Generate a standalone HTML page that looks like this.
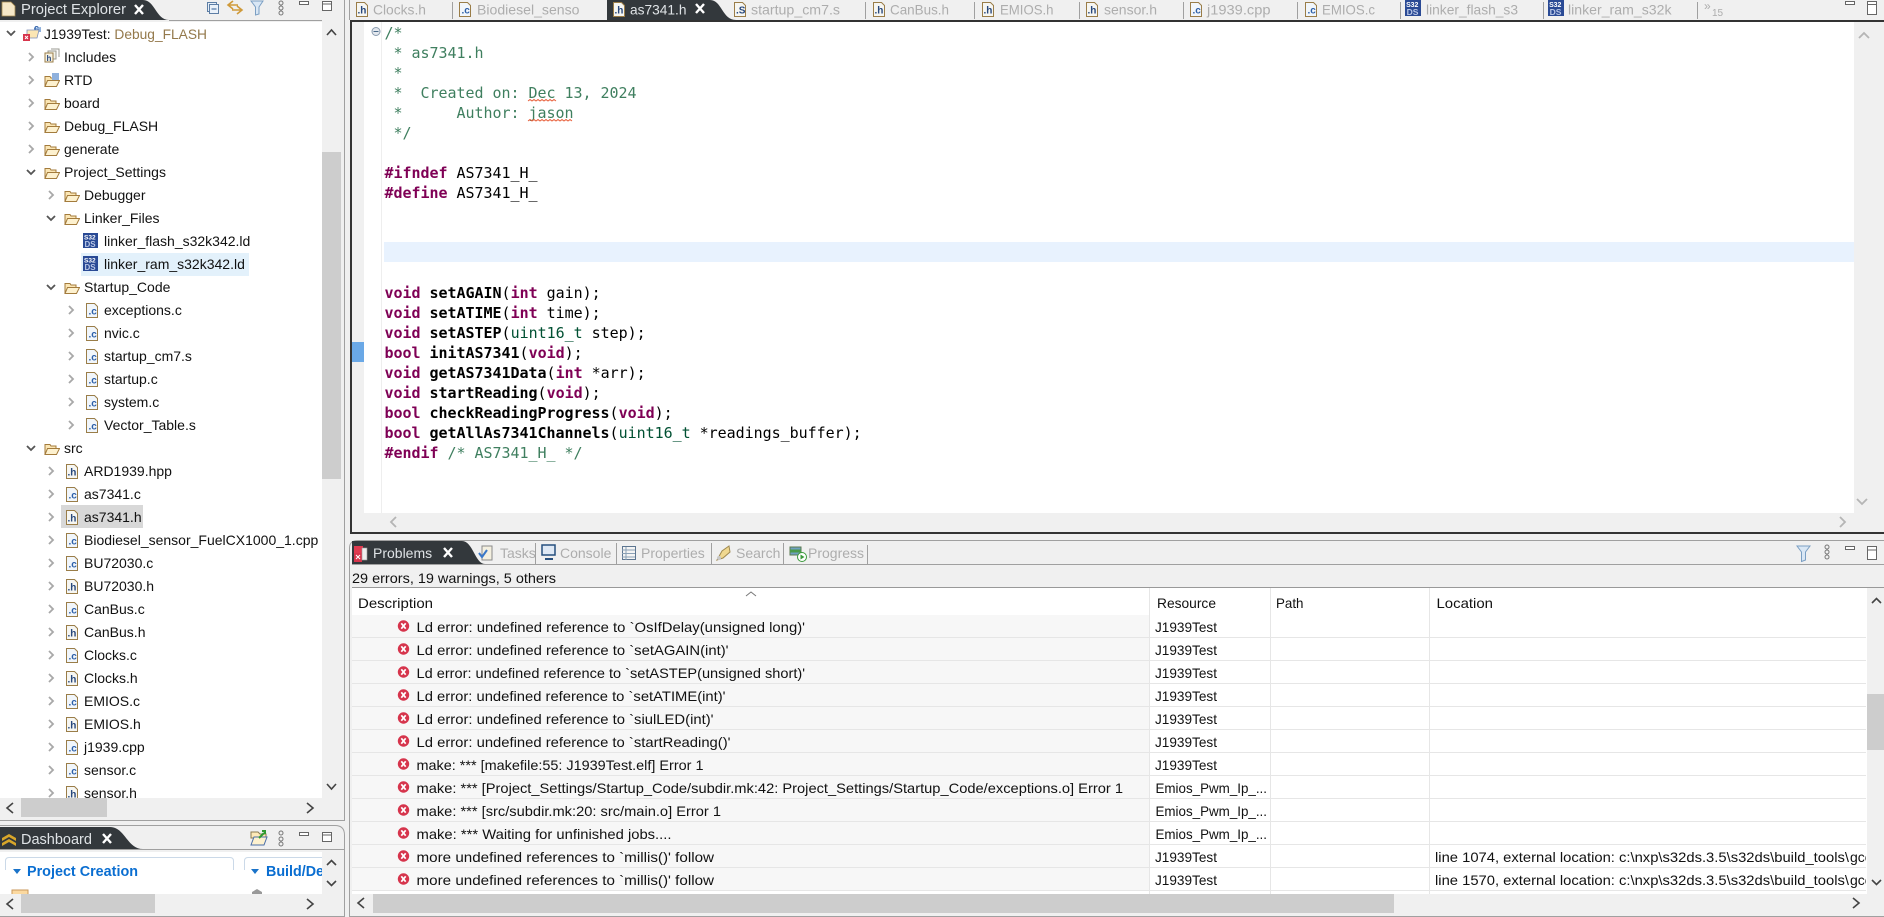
<!DOCTYPE html>
<html><head><meta charset="utf-8"><title>J1939Test</title>
<style>
html,body{margin:0;padding:0;background:#f0f0f0;width:1884px;height:917px;overflow:hidden}
svg{display:block;position:absolute;left:0;top:0}
text{font-family:"Liberation Sans",sans-serif;font-size:14px;fill:#111;white-space:pre}
.g{fill:#adadad}.w{fill:#dfe3e6}
.m{font-family:"DejaVu Sans Mono",monospace;font-size:15px;letter-spacing:-.03px;fill:#000}
.c{fill:#3f7f5f}.k{fill:#7f0055;font-weight:bold}.f{font-weight:bold}.t{fill:#005032}
.a{fill:none;stroke:#555;stroke-width:1.8}.n{fill:none;stroke:#a8a8a8;stroke-width:1.8}
.v{fill:none;stroke:#444;stroke-width:1.6}
.l{stroke:#e6e6e6;stroke-width:1;fill:none}
.b{stroke:#a0a0a0;stroke-width:1;fill:none}
.th{fill:#cdcdcd}
</style></head><body>
<svg width="1884" height="917" viewBox="0 0 1884 917" xmlns="http://www.w3.org/2000/svg">
<defs>
<symbol id="fo" viewBox="0 0 16 14"><path d="M1 12.5V2.500h5l1 1.500h5v2.500" fill="#fbe6b4" stroke="#a37b3c"/><path d="M1 12.500 3.500 6.500H15.500l-3 6z" fill="#fdf1cf" stroke="#a37b3c"/></symbol>
<symbol id="fc" viewBox="0 0 12 15"><path d="M.5 .5H8.500L11.500 3.500V14.500H.5z" fill="#f1f6fb" stroke="#9a7d48"/><text x="2.500" y="11.500" style="font-size:10px;font-weight:bold;fill:#2c5fa8">.c</text></symbol>
<symbol id="fh" viewBox="0 0 12 15"><path d="M.5 .5H8.500L11.500 3.500V14.500H.5z" fill="#f6f6f2" stroke="#9a7d48"/><text x="1.500" y="11.500" style="font-size:10px;font-weight:bold;fill:#27477c">.h</text></symbol>
<symbol id="fs" viewBox="0 0 12 15"><path d="M.5 .5H8.500L11.500 3.500V14.500H.5z" fill="#f6f6f2" stroke="#9a7d48"/><text x="2" y="11.500" style="font-size:10px;font-weight:bold;fill:#27477c">.S</text></symbol>
<symbol id="s3" viewBox="0 0 15 15"><rect width="15" height="15" fill="#2a4a95"/><text x="1" y="6.500" style="font-size:6.500px;font-weight:bold;fill:#fff">S32</text><text x="1.500" y="14" style="font-size:8px;font-weight:bold;fill:#b8c6e6">DS</text></symbol>
<symbol id="er" viewBox="0 0 12 12"><circle cx="6" cy="6" r="5.700" fill="#d6344c"/><path d="M3.800 3.300 8.200 8.700M8.200 3.300 3.800 8.700" stroke="#fff" stroke-width="1.700"/></symbol>
</defs>

<!-- ===== left panel ===== -->
<rect x="0" y="22" width="322" height="776" fill="#fff"/>
<rect x="81" y="253" width="168" height="23" fill="#e3f1fb"/>
<rect x="61" y="505" width="82" height="23" fill="#d8d8d8"/>
<!-- project explorer tab -->
<path d="M0 0H143C155 0 156 20 169 20H0z" fill="#33383c"/>
<path d="M169 20.500H322" class="b"/>
<path d="M2 2h9l4 4v10H2z" fill="#f4e7c8" stroke="#a68a50" stroke-width=".8"/>
<text x="21" y="14" class="w" style="font-size:14.500px" textLength="105" lengthAdjust="spacingAndGlyphs">Project Explorer</text>
<path d="M135 5l8 9M143 5l-8 9" stroke="#fff" stroke-width="2.400"/>
<rect x="207.500" y="2.500" width="9" height="9" fill="#e6eef7" stroke="#5d7ea5"/><rect x="209.500" y="4.500" width="9" height="9" fill="#eaf1f9" stroke="#5d7ea5"/><path d="M211.500 9h5" stroke="#2e5c92"/>
<path d="M228 5h10M233 1l-5 4 5 4M242 10h-10M237 6l5 4-5 4" fill="none" stroke="#cf9a3a" stroke-width="1.600"/>
<path d="M251 1H263L259 7V14L255.500 15V7z" fill="#d9e7f5" stroke="#7b9fc3"/>
<circle cx="281" cy="3" r="2" fill="none" stroke="#777"/><circle cx="281" cy="8" r="2" fill="none" stroke="#777"/><circle cx="281" cy="13" r="2" fill="none" stroke="#777"/>
<rect x="299.500" y="1.500" width="9" height="3" fill="#fff" stroke="#666"/>
<rect x="322.500" y="1.500" width="9" height="9" fill="#fff" stroke="#666"/><path d="M322 4h10" stroke="#666"/>

<!-- tree -->
<path class="a" d="M7 31l4 4 4-4"/>
<path d="M34 28l7-1v5h-7z" fill="#8fb1dd"/><text x="34" y="31" style="font-size:9px;font-weight:bold;fill:#2c5fa8">c</text>
<path d="M27 30h12l-2 8H27z" fill="#fbe6b4" stroke="#7c8fb8" stroke-width=".8"/><rect x="23" y="34" width="7" height="7" fill="#d7354c"/><path d="M25 36l3 3M28 36l-3 3" stroke="#fff"/>
<text x="44" y="39" textLength="163" lengthAdjust="spacingAndGlyphs">J1939Test:<tspan fill="#94794b"> Debug_FLASH</tspan></text>

<path class="n" d="M29 53l4 4-4 4"/><path d="M48 51h8v8h-8z" fill="#f2f2ea" stroke="#9a9a90"/><path d="M51 49h8v8" fill="none" stroke="#9a9a90"/><rect x="45" y="53" width="8" height="9" fill="#f8f4e4" stroke="#9a7d48"/><text x="46.500" y="61" style="font-size:8px;font-weight:bold;fill:#27477c">h</text>
<text x="64" y="62">Includes</text>
<path class="n" d="M29 76l4 4-4 4"/><use href="#fo" x="44" y="74" width="16" height="14"/><rect x="52" y="73" width="7" height="7" fill="#8fb1dd"/><text x="64" y="85">RTD</text>
<path class="n" d="M29 99l4 4-4 4"/><use href="#fo" x="44" y="97" width="16" height="14"/><text x="64" y="108">board</text>
<path class="n" d="M29 122l4 4-4 4"/><use href="#fo" x="44" y="120" width="16" height="14"/><text x="64" y="131">Debug_FLASH</text>
<path class="n" d="M29 145l4 4-4 4"/><use href="#fo" x="44" y="143" width="16" height="14"/><text x="64" y="154">generate</text>
<path class="a" d="M27 170l4 4 4-4"/><use href="#fo" x="44" y="166" width="16" height="14"/><text x="64" y="177">Project_Settings</text>
<path class="n" d="M49 191l4 4-4 4"/><use href="#fo" x="64" y="189" width="16" height="14"/><text x="84" y="200">Debugger</text>
<path class="a" d="M47 216l4 4 4-4"/><use href="#fo" x="64" y="212" width="16" height="14"/><text x="84" y="223">Linker_Files</text>
<use href="#s3" x="83" y="233" width="15" height="15"/><text x="104" y="246">linker_flash_s32k342.ld</text>
<use href="#s3" x="83" y="256" width="15" height="15"/><text x="104" y="269">linker_ram_s32k342.ld</text>
<path class="a" d="M47 285l4 4 4-4"/><use href="#fo" x="64" y="281" width="16" height="14"/><text x="84" y="292">Startup_Code</text>
<path class="n" d="M69 306l4 4-4 4"/><use href="#fc" x="86" y="303" width="12" height="15"/><text x="104" y="315">exceptions.c</text>
<path class="n" d="M69 329l4 4-4 4"/><use href="#fc" x="86" y="326" width="12" height="15"/><text x="104" y="338">nvic.c</text>
<path class="n" d="M69 352l4 4-4 4"/><use href="#fc" x="86" y="349" width="12" height="15"/><text x="104" y="361">startup_cm7.s</text>
<path class="n" d="M69 375l4 4-4 4"/><use href="#fc" x="86" y="372" width="12" height="15"/><text x="104" y="384">startup.c</text>
<path class="n" d="M69 398l4 4-4 4"/><use href="#fc" x="86" y="395" width="12" height="15"/><text x="104" y="407">system.c</text>
<path class="n" d="M69 421l4 4-4 4"/><use href="#fc" x="86" y="418" width="12" height="15"/><text x="104" y="430">Vector_Table.s</text>
<path class="a" d="M27 446l4 4 4-4"/><use href="#fo" x="44" y="442" width="16" height="14"/><text x="64" y="453">src</text>
<path class="n" d="M49 467l4 4-4 4"/><use href="#fh" x="66" y="464" width="12" height="15"/><text x="84" y="476">ARD1939.hpp</text>
<path class="n" d="M49 490l4 4-4 4"/><use href="#fc" x="66" y="487" width="12" height="15"/><text x="84" y="499">as7341.c</text>
<path class="n" d="M49 513l4 4-4 4"/><use href="#fh" x="66" y="510" width="12" height="15"/><text x="84" y="522">as7341.h</text>
<path class="n" d="M49 536l4 4-4 4"/><use href="#fc" x="66" y="533" width="12" height="15"/><text x="84" y="545">Biodiesel_sensor_FuelCX1000_1.cpp</text>
<path class="n" d="M49 559l4 4-4 4"/><use href="#fc" x="66" y="556" width="12" height="15"/><text x="84" y="568">BU72030.c</text>
<path class="n" d="M49 582l4 4-4 4"/><use href="#fh" x="66" y="579" width="12" height="15"/><text x="84" y="591">BU72030.h</text>
<path class="n" d="M49 605l4 4-4 4"/><use href="#fc" x="66" y="602" width="12" height="15"/><text x="84" y="614">CanBus.c</text>
<path class="n" d="M49 628l4 4-4 4"/><use href="#fh" x="66" y="625" width="12" height="15"/><text x="84" y="637">CanBus.h</text>
<path class="n" d="M49 651l4 4-4 4"/><use href="#fc" x="66" y="648" width="12" height="15"/><text x="84" y="660">Clocks.c</text>
<path class="n" d="M49 674l4 4-4 4"/><use href="#fh" x="66" y="671" width="12" height="15"/><text x="84" y="683">Clocks.h</text>
<path class="n" d="M49 697l4 4-4 4"/><use href="#fc" x="66" y="694" width="12" height="15"/><text x="84" y="706">EMIOS.c</text>
<path class="n" d="M49 720l4 4-4 4"/><use href="#fh" x="66" y="717" width="12" height="15"/><text x="84" y="729">EMIOS.h</text>
<path class="n" d="M49 743l4 4-4 4"/><use href="#fc" x="66" y="740" width="12" height="15"/><text x="84" y="752">j1939.cpp</text>
<path class="n" d="M49 766l4 4-4 4"/><use href="#fc" x="66" y="763" width="12" height="15"/><text x="84" y="775">sensor.c</text>
<path class="n" d="M49 789l4 4-4 4"/><use href="#fh" x="66" y="786" width="12" height="15"/><text x="84" y="798">sensor.h</text>

<!-- left scrollbars -->
<rect x="322" y="22" width="21" height="776" fill="#f0f0f0"/>
<rect x="322" y="152" width="19" height="327" class="th"/>
<path class="v" d="M327 35l4.500-5 4.500 5"/><path class="v" d="M327 784l4.500 5 4.500-5"/>
<rect x="0" y="798" width="343" height="22" fill="#f0f0f0"/>
<rect x="21" y="798" width="86" height="19" class="th"/>
<path class="v" d="M13 803l-6 5 6 5"/><path class="v" d="M307 803l6 5-6 5"/>
<path class="b" d="M0 820.500H344.500M344.500 0V821"/>

<!-- dashboard -->
<rect x="0" y="852" width="322" height="42" fill="#fff"/>
<path class="b" d="M0 825.500H335Q344.500 825.500 344.500 835V917M0 849.500H344M0 916.500H344"/>
<path d="M0 827H110C125 827 127 849 143 849H0z" fill="#33383c"/>
<path d="M2 838l7-4 7 4v3l-7-4-7 4zM2 843l7-4 7 4v3l-7-4-7 4z" fill="#d8a62a"/>
<text x="21" y="844" class="w" style="font-size:14.500px">Dashboard</text>
<path d="M103 834l8 9M111 834l-8 9" stroke="#fff" stroke-width="2.400"/>
<path d="M251 832h7l2 2h6v4H251z" fill="#fde9b8" stroke="#8a7a50"/><path d="M251 845l3-8h13l-3 8z" fill="#fdf1cf" stroke="#4a6ea8"/><path d="M259 838l5-5M262 831h3v3" stroke="#2f9a2f" stroke-width="2" fill="none"/>
<circle cx="281" cy="833" r="2" fill="none" stroke="#777"/><circle cx="281" cy="839" r="2" fill="none" stroke="#777"/><circle cx="281" cy="844" r="2" fill="none" stroke="#777"/>
<rect x="299.500" y="832.500" width="9" height="3" fill="#fff" stroke="#666"/>
<rect x="322.500" y="832.500" width="9" height="9" fill="#fff" stroke="#666"/><path d="M322 835h10" stroke="#666"/>
<path d="M5.500 870V861Q5.500 857.500 9 857.500H230Q233.500 857.500 233.500 861V870" fill="none" stroke="#cbd9e8"/>
<path d="M244.500 870V861Q244.500 857.500 248 857.500H322" fill="none" stroke="#cbd9e8"/>
<path d="M13 869h8l-4 5z" fill="#1a73c9"/>
<text x="27" y="876" style="font-size:14.300px;font-weight:bold;fill:#0a6ed1" textLength="111" lengthAdjust="spacingAndGlyphs">Project Creation</text>
<path d="M251 869h8l-4 5z" fill="#1a73c9"/>
<svg x="0" y="849" width="322" height="45" viewBox="0 849 322 45">
<text x="266" y="876" style="font-size:14.300px;font-weight:bold;fill:#0a6ed1">Build/Debug</text>
<rect x="12" y="890" width="16" height="8" fill="#fbd9a0" stroke="#c9975a"/>
<text x="36" y="904" style="font-size:14px;font-weight:bold;fill:#0a6ed1">S32DS Project from Example</text>
<path d="M252 892l5-3 5 3v4h-10z" fill="#999"/>
<text x="275" y="904" style="font-size:14px;font-weight:bold;fill:#0a6ed1">Build</text>
</svg>
<path class="v" d="M327 865l4.500-4.500 4.500 4.500"/><path class="v" d="M327 881l4.500 4.500 4.500-4.500"/>
<rect x="21" y="894" width="134" height="19" class="th"/>
<path class="v" d="M13 899l-6 5 6 5"/><path class="v" d="M307 899l6 5-6 5"/>

<!-- ===== editor ===== -->
<path class="b" d="M349.500 0V20"/>
<rect x="352" y="22" width="1502" height="491" fill="#fff"/>
<rect x="352" y="22" width="12" height="491" fill="#f0f0f0"/>
<path d="M381.500 22V513" stroke="#eeeeee"/>
<rect x="384" y="242" width="1470" height="20" fill="#e8f2fe"/>
<rect x="352" y="342" width="12" height="20" fill="#6aa8e6"/>
<circle cx="376" cy="31.500" r="4" fill="#e4e8ee" stroke="#8a9cb0"/><path d="M373.500 31.500h5" stroke="#4a6a8a"/>

<text class="m c" x="384.500" y="38">/*</text>
<text class="m c" x="384.500" y="58"> * as7341.h</text>
<text class="m c" x="384.500" y="78"> *</text>
<text class="m c" x="384.500" y="98"> *  Created on: Dec 13, 2024</text>
<text class="m c" x="384.500" y="118"> *      Author: jason</text>
<text class="m c" x="384.500" y="138"> */</text>
<path d="M528 101l2-1.500 2 1.500 2-1.500 2 1.500 2-1.500 2 1.500 2-1.500 2 1.500 2-1.500 2 1.500 2-1.500 2 1.500 2-1.500 2 1.500" fill="none" stroke="#e8603c"/>
<path d="M528 121l2-1.500 2 1.500 2-1.500 2 1.500 2-1.500 2 1.500 2-1.500 2 1.500 2-1.500 2 1.500 2-1.500 2 1.500 2-1.500 2 1.500 2-1.500 2 1.500 2-1.500 2 1.500 2-1.500 2 1.500 2-1.500 2 1.500" fill="none" stroke="#e8603c"/>
<text class="m" x="384.500" y="178"><tspan class="k">#ifndef</tspan> AS7341_H_</text>
<text class="m" x="384.500" y="198"><tspan class="k">#define</tspan> AS7341_H_</text>
<text class="m" x="384.500" y="298"><tspan class="k">void</tspan> <tspan class="f">setAGAIN</tspan>(<tspan class="k">int</tspan> gain);</text>
<text class="m" x="384.500" y="318"><tspan class="k">void</tspan> <tspan class="f">setATIME</tspan>(<tspan class="k">int</tspan> time);</text>
<text class="m" x="384.500" y="338"><tspan class="k">void</tspan> <tspan class="f">setASTEP</tspan>(<tspan class="t">uint16_t</tspan> step);</text>
<text class="m" x="384.500" y="358"><tspan class="k">bool</tspan> <tspan class="f">initAS7341</tspan>(<tspan class="k">void</tspan>);</text>
<text class="m" x="384.500" y="378"><tspan class="k">void</tspan> <tspan class="f">getAS7341Data</tspan>(<tspan class="k">int</tspan> *arr);</text>
<text class="m" x="384.500" y="398"><tspan class="k">void</tspan> <tspan class="f">startReading</tspan>(<tspan class="k">void</tspan>);</text>
<text class="m" x="384.500" y="418"><tspan class="k">bool</tspan> <tspan class="f">checkReadingProgress</tspan>(<tspan class="k">void</tspan>);</text>
<text class="m" x="384.500" y="438"><tspan class="k">bool</tspan> <tspan class="f">getAllAs7341Channels</tspan>(<tspan class="t">uint16_t</tspan> *readings_buffer);</text>
<text class="m" x="384.500" y="458"><tspan class="k">#endif</tspan> <tspan class="c">/* AS7341_H_ */</tspan></text>

<!-- editor frame + scrollbars -->
<path d="M1859 38l5-5 5 5" fill="none" stroke="#b5b5b5" stroke-width="1.800"/>
<path d="M1857 499l5 5 5-5" fill="none" stroke="#b5b5b5" stroke-width="1.800"/>
<path d="M396 517l-5 5 5 5" fill="none" stroke="#b5b5b5" stroke-width="1.800"/>
<path d="M1840 517l5 5-5 5" fill="none" stroke="#b5b5b5" stroke-width="1.800"/>
<rect x="350" y="20" width="1534" height="2" fill="#333"/>
<rect x="350" y="20" width="2" height="514" fill="#333"/>
<rect x="350" y="532" width="1534" height="2" fill="#333"/>

<!-- editor tabs -->
<path class="b" d="M452.500 2V19M865.500 2V19M974.500 2V19M1079.500 2V19M1183.500 2V19M1297.500 2V19M1400.500 2V19M1543.500 2V19M1697.500 2V19"/>
<use href="#fh" x="356" y="2" width="12" height="15"/><text x="373" y="14.500" class="g" textLength="53" lengthAdjust="spacingAndGlyphs">Clocks.h</text>
<use href="#fc" x="459" y="2" width="12" height="15"/><text x="477" y="14.500" class="g" textLength="102.500" lengthAdjust="spacingAndGlyphs">Biodiesel_senso</text>
<path d="M607 0H710C722 0 722 20 736 20H607z" fill="#33383c"/>
<use href="#fh" x="613" y="2" width="12" height="15"/><text x="630" y="14.500" class="w" textLength="56.500" lengthAdjust="spacingAndGlyphs">as7341.h</text>
<path d="M696 4l8 9M704 4l-8 9" stroke="#fff" stroke-width="2.400"/>
<use href="#fs" x="734" y="2" width="12" height="15"/><text x="751" y="14.500" class="g" textLength="89" lengthAdjust="spacingAndGlyphs">startup_cm7.s</text>
<use href="#fh" x="873" y="2" width="12" height="15"/><text x="890" y="14.500" class="g" textLength="59" lengthAdjust="spacingAndGlyphs">CanBus.h</text>
<use href="#fh" x="982" y="2" width="12" height="15"/><text x="1000" y="14.500" class="g" textLength="53.500" lengthAdjust="spacingAndGlyphs">EMIOS.h</text>
<use href="#fh" x="1086" y="2" width="12" height="15"/><text x="1104" y="14.500" class="g" textLength="53" lengthAdjust="spacingAndGlyphs">sensor.h</text>
<use href="#fc" x="1190" y="2" width="12" height="15"/><text x="1207" y="14.500" class="g" textLength="63.500" lengthAdjust="spacingAndGlyphs">j1939.cpp</text>
<use href="#fc" x="1305" y="2" width="12" height="15"/><text x="1322" y="14.500" class="g" textLength="53" lengthAdjust="spacingAndGlyphs">EMIOS.c</text>
<use href="#s3" x="1405" y="0" width="16" height="16"/><text x="1426" y="14.500" class="g" textLength="92" lengthAdjust="spacingAndGlyphs">linker_flash_s3</text>
<use href="#s3" x="1548" y="0" width="16" height="16"/><text x="1568" y="14.500" class="g" textLength="103.500" lengthAdjust="spacingAndGlyphs">linker_ram_s32k</text>
<text x="1704" y="10" class="g" style="font-size:12px">»</text><text x="1712" y="16" class="g" style="font-size:10px">15</text>
<rect x="1845.500" y="1.500" width="9" height="3" fill="#fff" stroke="#666"/>
<rect x="1867.500" y="1.500" width="9" height="13" fill="#fff" stroke="#666"/><path d="M1867 4.500h10" stroke="#666"/>

<!-- ===== problems ===== -->
<path class="b" d="M349.500 917V548Q349.500 540.500 358 540.500H1884M352 564.500H1884M349 916.500H1884"/>
<path d="M352 587.500H1884" stroke="#999"/>
<path d="M352 541H462C473 541 475 564 485 564H352z" fill="#33383c"/>
<rect x="354" y="546" width="9" height="9" fill="#e03a50"/><rect x="354" y="553" width="8" height="9" fill="#d7354c"/><path d="M356 555l4 4M360 555l-4 4" stroke="#fff"/><rect x="362" y="548" width="5" height="12" fill="#eee" stroke="#999" stroke-width=".6"/>
<text x="373" y="558" class="w">Problems</text>
<path d="M444 548l8 9M452 548l-8 9" stroke="#fff" stroke-width="2.400"/>
<path class="b" d="M535.500 543V564M616.500 543V564M711.500 543V564M783.500 543V564M867.500 545V564"/>
<path d="M482 546h10v14h-10z" fill="#f4f0e0" stroke="#8a8a8a"/><path d="M479 553l3 4 5-7" fill="none" stroke="#3a78c8" stroke-width="2"/>
<text x="500" y="558" class="g">Tasks</text>
<rect x="542" y="545" width="13" height="10" fill="#dfe9f5" stroke="#27507f" stroke-width="1.500"/><path d="M545 559h8" stroke="#27507f" stroke-width="2"/>
<text x="560" y="558" class="g">Console</text>
<rect x="622.500" y="546.500" width="13" height="13" fill="#f4f4f4" stroke="#5c7590"/><path d="M622 550h13M622 553.500h13M622 557h13M626 547v13" stroke="#8aa0b5"/>
<text x="641" y="558" class="g">Properties</text>
<path d="M717 560l5-9 7-5 1 6-7 6z" fill="#f0d890" stroke="#a08a50"/><circle cx="719" cy="558" r="2" fill="#c8c8c8"/>
<text x="736" y="558" class="g">Search</text>
<rect x="790" y="547" width="11" height="8" fill="#6fa0c0" stroke="#5a7a50"/><path d="M790 551h11" stroke="#4a9a4a" stroke-width="3"/><circle cx="802" cy="557" r="4.500" fill="#fff" stroke="#3a9a3a"/><path d="M800.500 554.500v5l4-2.500z" fill="#3a9a3a"/>
<text x="808" y="558" class="g">Progress</text>
<path d="M1797 546h13l-4.500 6v8l-4 1.500V552z" fill="#d9e7f5" stroke="#7b9fc3"/>
<circle cx="1827" cy="547" r="2" fill="none" stroke="#777"/><circle cx="1827" cy="552" r="2" fill="none" stroke="#777"/><circle cx="1827" cy="557" r="2" fill="none" stroke="#777"/>
<rect x="1845.500" y="546.500" width="9" height="3" fill="#fff" stroke="#666"/>
<rect x="1867.500" y="546.500" width="9" height="13" fill="#fff" stroke="#666"/><path d="M1867 550h10" stroke="#666"/>
<text x="352" y="583" textLength="204" lengthAdjust="spacingAndGlyphs">29 errors, 19 warnings, 5 others</text>

<rect x="352" y="588" width="1515" height="306" fill="#fff"/>
<rect x="352" y="615" width="797" height="276" fill="#f7f7f7"/>
<path d="M746 596l5-4 5 4" fill="none" stroke="#777"/>
<text x="358" y="608" textLength="75" lengthAdjust="spacingAndGlyphs">Description</text>
<text x="1157" y="608" textLength="59" lengthAdjust="spacingAndGlyphs">Resource</text>
<text x="1276" y="608" textLength="27.500" lengthAdjust="spacingAndGlyphs">Path</text>
<text x="1436.500" y="608" textLength="56.500" lengthAdjust="spacingAndGlyphs">Location</text>
<path class="l" d="M352 637.500H1866M352 660.500H1866M352 683.500H1866M352 706.500H1866M352 729.500H1866M352 752.500H1866M352 775.500H1866M352 798.500H1866M352 821.500H1866M352 844.500H1866M352 867.500H1866M352 890.500H1866M1149.500 588V894M1270.500 588V894M1429.500 588V894"/>

<use href="#er" x="397.500" y="620" width="12" height="12"/><text x="416.500" y="632" textLength="388.500" lengthAdjust="spacingAndGlyphs">Ld error: undefined reference to `OsIfDelay(unsigned long)'</text>
<use href="#er" x="397.500" y="643" width="12" height="12"/><text x="416.500" y="655" textLength="312" lengthAdjust="spacingAndGlyphs">Ld error: undefined reference to `setAGAIN(int)'</text>
<use href="#er" x="397.500" y="666" width="12" height="12"/><text x="416.500" y="678" textLength="388.500" lengthAdjust="spacingAndGlyphs">Ld error: undefined reference to `setASTEP(unsigned short)'</text>
<use href="#er" x="397.500" y="689" width="12" height="12"/><text x="416.500" y="701" textLength="309" lengthAdjust="spacingAndGlyphs">Ld error: undefined reference to `setATIME(int)'</text>
<use href="#er" x="397.500" y="712" width="12" height="12"/><text x="416.500" y="724" textLength="297" lengthAdjust="spacingAndGlyphs">Ld error: undefined reference to `siulLED(int)'</text>
<use href="#er" x="397.500" y="735" width="12" height="12"/><text x="416.500" y="747" textLength="314" lengthAdjust="spacingAndGlyphs">Ld error: undefined reference to `startReading()'</text>
<use href="#er" x="397.500" y="758" width="12" height="12"/><text x="416.500" y="770" textLength="287" lengthAdjust="spacingAndGlyphs">make: *** [makefile:55: J1939Test.elf] Error 1</text>
<use href="#er" x="397.500" y="781" width="12" height="12"/><text x="416.500" y="793" textLength="706.500" lengthAdjust="spacingAndGlyphs">make: *** [Project_Settings/Startup_Code/subdir.mk:42: Project_Settings/Startup_Code/exceptions.o] Error 1</text>
<use href="#er" x="397.500" y="804" width="12" height="12"/><text x="416.500" y="816" textLength="304.500" lengthAdjust="spacingAndGlyphs">make: *** [src/subdir.mk:20: src/main.o] Error 1</text>
<use href="#er" x="397.500" y="827" width="12" height="12"/><text x="416.500" y="839" textLength="255" lengthAdjust="spacingAndGlyphs">make: *** Waiting for unfinished jobs....</text>
<use href="#er" x="397.500" y="850" width="12" height="12"/><text x="416.500" y="862" textLength="297.500" lengthAdjust="spacingAndGlyphs">more undefined references to `millis()' follow</text>
<use href="#er" x="397.500" y="873" width="12" height="12"/><text x="416.500" y="885" textLength="297.500" lengthAdjust="spacingAndGlyphs">more undefined references to `millis()' follow</text>

<text x="1155" y="632" textLength="62" lengthAdjust="spacingAndGlyphs">J1939Test</text><text x="1155" y="655" textLength="62" lengthAdjust="spacingAndGlyphs">J1939Test</text><text x="1155" y="678" textLength="62" lengthAdjust="spacingAndGlyphs">J1939Test</text><text x="1155" y="701" textLength="62" lengthAdjust="spacingAndGlyphs">J1939Test</text><text x="1155" y="724" textLength="62" lengthAdjust="spacingAndGlyphs">J1939Test</text><text x="1155" y="747" textLength="62" lengthAdjust="spacingAndGlyphs">J1939Test</text><text x="1155" y="770" textLength="62" lengthAdjust="spacingAndGlyphs">J1939Test</text>
<text x="1155.500" y="793" textLength="111.500" lengthAdjust="spacingAndGlyphs">Emios_Pwm_Ip_...</text><text x="1155.500" y="816" textLength="111.500" lengthAdjust="spacingAndGlyphs">Emios_Pwm_Ip_...</text><text x="1155.500" y="839" textLength="111.500" lengthAdjust="spacingAndGlyphs">Emios_Pwm_Ip_...</text>
<text x="1155" y="862" textLength="62" lengthAdjust="spacingAndGlyphs">J1939Test</text><text x="1155" y="885" textLength="62" lengthAdjust="spacingAndGlyphs">J1939Test</text>
<svg x="1430" y="845" width="436" height="46" viewBox="1430 845 436 46">
<text x="1435" y="862" textLength="414" lengthAdjust="spacingAndGlyphs">line 1074, external location: c:\nxp\s32ds.3.5\s32ds\build_tools\</text><text x="1850" y="862">gcc</text>
<text x="1435" y="885" textLength="414" lengthAdjust="spacingAndGlyphs">line 1570, external location: c:\nxp\s32ds.3.5\s32ds\build_tools\</text><text x="1850" y="885">gcc</text>
</svg>

<rect x="1867" y="588" width="17" height="306" fill="#f0f0f0"/>
<rect x="1867" y="694" width="17" height="56" class="th"/>
<path class="v" d="M1872 603l4.500-4.500 4.500 4.500"/><path class="v" d="M1872 880l4.500 4.500 4.500-4.500"/>
<rect x="352" y="894" width="1532" height="22" fill="#f0f0f0"/>
<rect x="373" y="894" width="1021" height="19" class="th"/>
<path class="v" d="M364 898l-6 5 6 5"/><path class="v" d="M1853 898l6 5-6 5"/>
<path class="b" d="M349 916.500H1884"/>
</svg>
</body></html>
